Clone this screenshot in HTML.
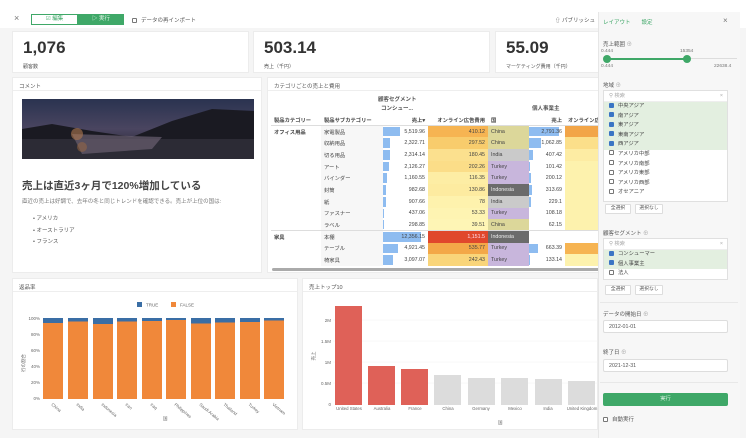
<!DOCTYPE html>
<html><head><meta charset="utf-8"><style>
*{margin:0;padding:0;box-sizing:border-box}
body{width:746px;height:438px;overflow:hidden;background:#f5f5f5;font-family:"Liberation Sans","Noto Sans CJK JP",sans-serif;color:#333;position:relative}
.a{position:absolute}
.p{position:absolute;background:#fff;border:1px solid #ececec}
.t{font-size:5.5px;color:#555;white-space:nowrap}
.hd{position:absolute;left:0;right:0;top:0;height:13px;border-bottom:1px solid #eee;font-size:5.5px;color:#555;padding:4px 6px}
table{border-collapse:collapse;font-size:5.3px;color:#444}
td{height:11.7px;padding:0 3px;white-space:nowrap;position:relative}
.r{text-align:right}
.bar{position:absolute;left:0;top:1px;bottom:1px;background:#8ebcf0}
.chk{display:inline-block;width:5px;height:5px;border:0.6px solid #777;border-radius:1px;vertical-align:-0.5px;margin-right:4px;background:#fff}
.on{background:#3a75c4;border-color:#3a75c4}
.row{height:9.6px;font-size:5.3px;color:#444;padding-left:5px;line-height:9.6px}
.g{background:#e3efe0}
.btn{position:absolute;height:10px;border:1px solid #ddd;background:#fff;font-size:4.8px;color:#555;text-align:center;line-height:8px;border-radius:1px}
.inp{position:absolute;left:603px;width:125px;height:13px;border:1px solid #ddd;background:#fff;font-size:5.3px;color:#555;padding:3px 5px;border-radius:2px}
</style></head><body>
<div class="a" style="left:0;top:0;width:746px;height:28px;background:#fff"></div>
<div class="a t" style="left:14px;top:13px;font-size:9px;color:#777">×</div>
<div class="a" style="left:31px;top:14px;width:47px;height:11px;border:1px solid #3fa868;background:#fff;font-size:5.5px;color:#3fa868;text-align:center;line-height:9px">☑ 編集</div>
<div class="a" style="left:78px;top:14px;width:46px;height:11px;background:#3fa868;font-size:5.5px;color:#e8f5ec;text-align:center;line-height:11px">▷ 実行</div>
<div class="a t" style="left:132px;top:16px"><span class="chk"></span>データの再インポート</div>
<div class="a t" style="left:555px;top:16px">⇧ パブリッシュ</div>

<div class="p" style="left:12px;top:31px;width:237px;height:42px"><div class="a" style="left:10px;top:6px;font-size:17px;font-weight:bold;color:#333">1,076</div><div class="a t" style="left:10px;top:31px;font-size:5px">顧客数</div></div>
<div class="p" style="left:253px;top:31px;width:237px;height:42px"><div class="a" style="left:10px;top:6px;font-size:17px;font-weight:bold;color:#333">503.14</div><div class="a t" style="left:10px;top:31px;font-size:5px">売上（千円）</div></div>
<div class="p" style="left:495px;top:31px;width:120px;height:42px"><div class="a" style="left:10px;top:6px;font-size:17px;font-weight:bold;color:#333">55.09</div><div class="a t" style="left:10px;top:31px;font-size:5px">マーケティング費用（千円）</div></div>

<div class="p" style="left:12px;top:77px;width:250px;height:196px">
<div class="hd">コメント</div>
<svg class="a" style="left:9px;top:21px" width="232" height="60"><defs><linearGradient id="sk" x1="0" y1="0" x2="0" y2="1"><stop offset="0" stop-color="#2a3350"/><stop offset=".5" stop-color="#4a4560"/><stop offset="1" stop-color="#1e1c24"/></linearGradient></defs><rect width="232" height="60" fill="url(#sk)"/><path d="M0 30 L30 25 L70 32 L110 38 L150 22 L190 10 L232 12 L232 60 L0 60Z" fill="#1a1a22"/><rect x="0" y="40" width="232" height="20" fill="#2c2b35"/><path d="M50 35 L140 38 L130 50 L60 55Z" fill="#6a6070" opacity=".7"/><circle cx="55" cy="35" r="6" fill="#b07a50" opacity=".6"/><circle cx="60" cy="48" r="5" fill="#a06a40" opacity=".5"/></svg>
<div class="a" style="left:9px;top:100px;font-size:10.5px;font-weight:bold;color:#444">売上は直近3ヶ月で120%増加している</div>
<div class="a t" style="left:9px;top:119px;font-size:5.5px;color:#777">直近の売上は好調で、去年の冬と同じトレンドを確認できる。売上が上位の国は:</div>
<div class="a t" style="left:20px;top:136px;line-height:11.5px;color:#555">• アメリカ<br>• オーストラリア<br>• フランス</div>
</div>

<div class="p" style="left:267px;top:77px;width:333px;height:196px;overflow:hidden">
<div class="hd">カテゴリごとの売上と費用</div>
<div class="a t" style="left:110px;top:17px;font-weight:bold">顧客セグメント</div>
<div class="a t" style="left:113px;top:26px;font-weight:bold">コンシュー...</div>
<div class="a t" style="left:264px;top:26px;font-weight:bold">個人事業主</div>
<table class="a" style="left:3px;top:36px;width:360px;table-layout:fixed">
<colgroup><col style="width:50px"><col style="width:62px"><col style="width:45px"><col style="width:60px"><col style="width:41px"><col style="width:36px"><col style="width:66px"></colgroup>
<tr style="border-bottom:1px solid #ddd;font-weight:bold"><td>製品カテゴリー</td><td>製品サブカテゴリー</td><td class="r">売上▾</td><td class="r">オンライン広告費用</td><td>国</td><td class="r">売上</td><td>オンライン広</td></tr>
<tr><td style="font-weight:bold">オフィス用品</td><td style="background:#f7f7f7">家電製品</td><td class="r"><div class="bar" style="width:17px"></div><span style="position:relative">5,519.96</span></td><td class="r" style="background:#f6b452">410.12</td><td style="background:#dcd79a">China</td><td class="r"><div class="bar" style="width:30px"></div><span style="position:relative">2,791.36</span></td><td style="background:#f2a548"></td></tr>
<tr><td></td><td style="background:#f7f7f7">収納用品</td><td class="r"><div class="bar" style="width:7px"></div><span style="position:relative">2,322.71</span></td><td class="r" style="background:#f8cc6c">297.52</td><td style="background:#dcd79a">China</td><td class="r"><div class="bar" style="width:12px"></div><span style="position:relative">1,062.85</span></td><td style="background:#fbdf8a"></td></tr>
<tr><td></td><td style="background:#f7f7f7">切る用品</td><td class="r"><div class="bar" style="width:7px"></div><span style="position:relative">2,314.14</span></td><td class="r" style="background:#fbe08e">180.45</td><td style="background:#cacaca">India</td><td class="r"><div class="bar" style="width:4px"></div>407.42</td><td style="background:#fdeca3"></td></tr>
<tr><td></td><td style="background:#f7f7f7">アート</td><td class="r"><div class="bar" style="width:6px"></div><span style="position:relative">2,126.27</span></td><td class="r" style="background:#fbdd88">202.26</td><td style="background:#c8b6dc">Turkey</td><td class="r"><div class="bar" style="width:1px"></div>101.42</td><td style="background:#fdf2ad"></td></tr>
<tr><td></td><td style="background:#f7f7f7">バインダー</td><td class="r"><div class="bar" style="width:3.5px"></div>1,160.55</td><td class="r" style="background:#fdeda4">116.35</td><td style="background:#c8b6dc">Turkey</td><td class="r"><div class="bar" style="width:2px"></div>200.12</td><td style="background:#fdf2ad"></td></tr>
<tr><td></td><td style="background:#f7f7f7">封筒</td><td class="r"><div class="bar" style="width:3px"></div>982.68</td><td class="r" style="background:#fdeba0">130.86</td><td style="background:#6b6b6b;color:#eee">Indonesia</td><td class="r"><div class="bar" style="width:3px"></div>313.69</td><td style="background:#fdf2ad"></td></tr>
<tr><td></td><td style="background:#f7f7f7">紙</td><td class="r"><div class="bar" style="width:3px"></div>907.66</td><td class="r" style="background:#fef2ad">78</td><td style="background:#cacaca">India</td><td class="r"><div class="bar" style="width:2px"></div>229.1</td><td style="background:#fdf2ad"></td></tr>
<tr><td></td><td style="background:#f7f7f7">ファスナー</td><td class="r"><div class="bar" style="width:1px"></div>437.06</td><td class="r" style="background:#fef4b2">53.33</td><td style="background:#c8b6dc">Turkey</td><td class="r">108.18</td><td style="background:#fdf2ad"></td></tr>
<tr style="border-bottom:1px solid #ddd"><td></td><td style="background:#f7f7f7">ラベル</td><td class="r"><div class="bar" style="width:1px"></div>298.85</td><td class="r" style="background:#fef5b5">39.51</td><td style="background:#dcd79a">China</td><td class="r">62.15</td><td style="background:#fdf2ad"></td></tr>
<tr><td style="font-weight:bold">家具</td><td style="background:#f7f7f7">本棚</td><td class="r"><div class="bar" style="width:38px"></div><span style="position:relative">12,356.15</span></td><td class="r" style="background:#e0472c;color:#fde">1,151.5</td><td style="background:#6b6b6b;color:#eee">Indonesia</td><td></td><td></td></tr>
<tr><td></td><td style="background:#f7f7f7">テーブル</td><td class="r"><div class="bar" style="width:15px"></div><span style="position:relative">4,921.45</span></td><td class="r" style="background:#f3a848">535.77</td><td style="background:#c8b6dc">Turkey</td><td class="r"><div class="bar" style="width:9px"></div>663.39</td><td style="background:#f6b452"></td></tr>
<tr><td></td><td style="background:#f7f7f7">椅家具</td><td class="r"><div class="bar" style="width:9.5px"></div>3,097.07</td><td class="r" style="background:#f9d57a">242.43</td><td style="background:#c8b6dc">Turkey</td><td class="r"><div class="bar" style="width:1px"></div>133.14</td><td style="background:#fdf2ad"></td></tr>
</table>
<div class="a" style="left:4px;top:190px;width:330px;height:3px;background:#aaa;border-radius:2px"></div>
</div>

<div class="p" style="left:12px;top:278px;width:286px;height:152px">
<div class="hd">返品率</div>
<svg class="a" style="left:0;top:14px" width="286" height="138" font-family="Liberation Sans" font-size="4.5" fill="#666">
<rect x="124" y="9" width="5" height="5" fill="#3a6ea5"/><text x="133" y="13.5">TRUE</text>
<rect x="158" y="9" width="5" height="5" fill="#f0883a"/><text x="167" y="13.5">FALSE</text>
<g text-anchor="end"><text x="27" y="27">100%</text><text x="27" y="43">80%</text><text x="27" y="59">60%</text><text x="27" y="75">40%</text><text x="27" y="91">20%</text><text x="27" y="107">0%</text></g>
<text transform="translate(12,70) rotate(-90)" text-anchor="middle">行の割合</text>
<g fill="#f0883a">
<rect x="30" y="25" width="20" height="81"/><rect x="55" y="25" width="20" height="81"/><rect x="80" y="25" width="20" height="81"/><rect x="104" y="25" width="20" height="81"/><rect x="129" y="25" width="20" height="81"/><rect x="153" y="25" width="20" height="81"/><rect x="178" y="25" width="20" height="81"/><rect x="202" y="25" width="20" height="81"/><rect x="227" y="25" width="20" height="81"/><rect x="251" y="25" width="20" height="81"/></g>
<g fill="#3a6ea5"><rect x="30" y="25" width="20" height="5"/><rect x="55" y="25" width="20" height="3.5"/><rect x="80" y="25" width="20" height="6"/><rect x="104" y="25" width="20" height="3.5"/><rect x="129" y="25" width="20" height="3"/><rect x="153" y="25" width="20" height="2"/><rect x="178" y="25" width="20" height="5.5"/><rect x="202" y="25" width="20" height="4.5"/><rect x="227" y="25" width="20" height="4"/><rect x="251" y="25" width="20" height="2.5"/></g>
<g font-size="4.3"><text transform="translate(38,112) rotate(40)">China</text><text transform="translate(63,112) rotate(40)">India</text><text transform="translate(88,112) rotate(40)">Indonesia</text><text transform="translate(112,112) rotate(40)">Iran</text><text transform="translate(137,112) rotate(40)">Iraq</text><text transform="translate(161,112) rotate(40)">Philippines</text><text transform="translate(186,112) rotate(40)">Saudi Arabia</text><text transform="translate(210,112) rotate(40)">Thailand</text><text transform="translate(235,112) rotate(40)">Turkey</text><text transform="translate(259,112) rotate(40)">Vietnam</text></g>
<text x="150" y="127">国</text>
</svg>
</div>

<div class="p" style="left:302px;top:278px;width:296px;height:152px">
<div class="hd">売上トップ10</div>
<svg class="a" style="left:0;top:14px" width="296" height="138" font-family="Liberation Sans" font-size="4.5" fill="#666">
<g stroke="#f0f0f0" stroke-width=".5"><line x1="30" y1="27" x2="296" y2="27"/><line x1="30" y1="48" x2="296" y2="48"/><line x1="30" y1="69" x2="296" y2="69"/><line x1="30" y1="90" x2="296" y2="90"/></g>
<g text-anchor="end"><text x="28" y="29">2M</text><text x="28" y="50">1.5M</text><text x="28" y="71">1M</text><text x="28" y="92">0.5M</text><text x="28" y="113">0</text></g>
<text transform="translate(12,63) rotate(-90)" text-anchor="middle">売上</text>
<rect x="32" y="13" width="27" height="99" fill="#df6158"/><rect x="65" y="73" width="27" height="39" fill="#df6158"/><rect x="98" y="76" width="27" height="36" fill="#df6158"/>
<g fill="#dcdcdc"><rect x="131" y="82" width="27" height="30"/><rect x="165" y="85" width="27" height="27"/><rect x="198" y="85" width="27" height="27"/><rect x="232" y="86" width="27" height="26"/><rect x="265" y="88" width="27" height="24"/></g>
<g text-anchor="middle" font-size="4.3"><text x="46" y="117">United States</text><text x="79" y="117">Australia</text><text x="112" y="117">France</text><text x="145" y="117">China</text><text x="178" y="117">Germany</text><text x="212" y="117">Mexico</text><text x="245" y="117">India</text><text x="279" y="117">United Kingdom</text></g>
<text x="195" y="131">国</text>
</svg>
</div>

<div class="a" style="left:598px;top:12px;width:142px;height:426px;background:#f7f7f7;border-left:1px solid #e6e6e6"></div>
<div class="a t" style="left:603px;top:18px;color:#3fa868">レイアウト　　設定</div>
<div class="a t" style="left:723px;top:16px;font-size:8px;color:#777">×</div>
<div class="a t" style="left:603px;top:40px">売上範囲 <span style="color:#aaa">⊕</span></div>
<div class="a t" style="left:601px;top:49px;font-size:4.8px;color:#777">0.444</div>
<div class="a t" style="left:680px;top:49px;font-size:4.8px;color:#777">15354</div>
<div class="a" style="left:607px;top:58px;width:80px;height:1.5px;background:#3fa868"></div>
<div class="a" style="left:687px;top:58px;width:50px;height:1px;background:#ddd"></div>
<div class="a" style="left:603px;top:55px;width:8px;height:8px;border-radius:50%;background:#3fa868"></div>
<div class="a" style="left:683px;top:55px;width:8px;height:8px;border-radius:50%;background:#3fa868"></div>
<div class="a t" style="left:601px;top:64px;font-size:4.8px;color:#777">0.444</div>
<div class="a t" style="left:714px;top:64px;font-size:4.8px;color:#777">22638.4</div>

<div class="a t" style="left:603px;top:81px">地域 <span style="color:#aaa">⊕</span></div>
<div class="a" style="left:603px;top:90px;width:125px;height:112px;background:#fff;border:1px solid #e0e0e0">
<div class="row" style="color:#aaa;border-bottom:1px solid #eee;height:11px;line-height:11px">⚲ 検索<span style="float:right;margin-right:4px">×</span></div>
<div class="row g"><span class="chk on"></span>中央アジア</div><div class="row g"><span class="chk on"></span>南アジア</div><div class="row g"><span class="chk on"></span>東アジア</div><div class="row g"><span class="chk on"></span>東南アジア</div><div class="row g"><span class="chk on"></span>西アジア</div>
<div class="row"><span class="chk"></span>アメリカ中部</div><div class="row"><span class="chk"></span>アメリカ南部</div><div class="row"><span class="chk"></span>アメリカ東部</div><div class="row"><span class="chk"></span>アメリカ西部</div><div class="row"><span class="chk"></span>オセアニア</div>
</div>
<div class="btn" style="left:605px;top:204px;width:26px">全選択</div><div class="btn" style="left:635px;top:204px;width:28px">選択なし</div>

<div class="a t" style="left:603px;top:229px">顧客セグメント <span style="color:#aaa">⊕</span></div>
<div class="a" style="left:603px;top:238px;width:125px;height:42px;background:#fff;border:1px solid #e0e0e0">
<div class="row" style="color:#aaa;border-bottom:1px solid #eee;height:11px;line-height:11px">⚲ 検索<span style="float:right;margin-right:4px">×</span></div>
<div class="row g"><span class="chk on"></span>コンシューマー</div><div class="row g"><span class="chk on"></span>個人事業主</div><div class="row"><span class="chk"></span>法人</div>
</div>
<div class="btn" style="left:605px;top:285px;width:26px">全選択</div><div class="btn" style="left:635px;top:285px;width:28px">選択なし</div>
<div class="a" style="left:600px;top:302px;width:138px;height:1px;background:#e8e8e8"></div>

<div class="a t" style="left:603px;top:310px">データの開始日 <span style="color:#aaa">⊕</span></div>
<div class="inp" style="top:320px">2012-01-01</div>
<div class="a t" style="left:603px;top:348px">終了日 <span style="color:#aaa">⊕</span></div>
<div class="inp" style="top:359px">2021-12-31</div>
<div class="a" style="left:600px;top:382px;width:138px;height:1px;background:#e8e8e8"></div>
<div class="a" style="left:603px;top:393px;width:125px;height:13px;background:#3fa868;border-radius:2px;font-size:5.3px;color:#dff2e5;text-align:center;line-height:13px">実行</div>
<div class="a t" style="left:603px;top:415px"><span class="chk"></span>自動実行</div>
</body></html>
